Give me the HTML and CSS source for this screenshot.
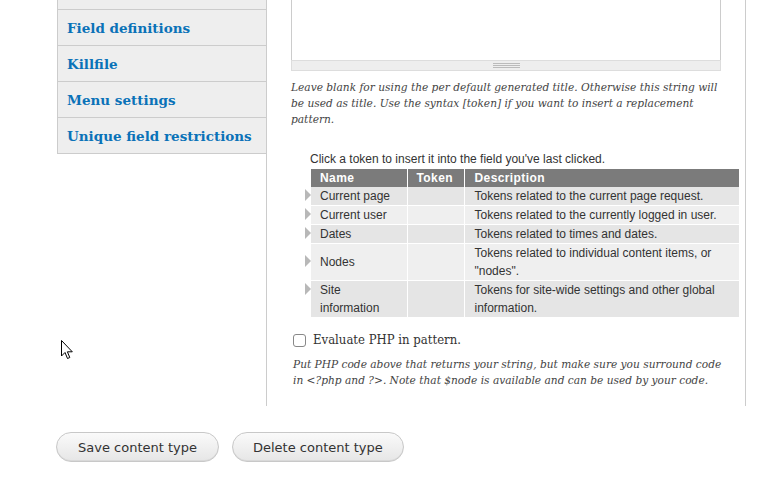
FILE: index.html
```html
<!DOCTYPE html>
<html>
<head>
<meta charset="utf-8">
<link rel="stylesheet" href="styles.css">
</head>
<body>
<div class="page">
  <div class="vtabs">
    <ul class="vtabs-menu">
      <li class="vtab vtab-cut"><a href="#">Publishing options</a></li>
      <li class="vtab"><a href="#">Field definitions</a></li>
      <li class="vtab"><a href="#">Killfile</a></li>
      <li class="vtab"><a href="#">Menu settings</a></li>
      <li class="vtab"><a href="#">Unique field restrictions</a></li>
    </ul>
    <div class="vtabs-pane">
      <div class="textarea-wrap">
        <div class="textarea"></div>
        <div class="grippie"><span class="grip-lines"></span></div>
      </div>
      <p class="description">Leave blank for using the per default generated title. Otherwise this string will be used as title. Use the syntax [token] if you want to insert a replacement pattern.</p>

      <div class="token-block">
        <p class="token-help">Click a token to insert it into the field you've last clicked.</p>
        <table class="token-tree">
          <colgroup>
            <col class="col-name">
            <col class="col-token">
            <col class="col-desc">
          </colgroup>
          <thead>
            <tr><th>Name</th><th>Token</th><th class="c-desc">Description</th></tr>
          </thead>
          <tbody>
            <tr class="dark"><td class="c-name"><span class="exp"></span>Current page</td><td></td><td class="c-desc">Tokens related to the current page request.</td></tr>
            <tr class="light"><td class="c-name"><span class="exp"></span>Current user</td><td></td><td class="c-desc">Tokens related to the currently logged in user.</td></tr>
            <tr class="dark"><td class="c-name"><span class="exp"></span>Dates</td><td></td><td class="c-desc">Tokens related to times and dates.</td></tr>
            <tr class="light"><td class="c-name"><span class="exp"></span>Nodes</td><td></td><td class="c-desc">Tokens related to individual content items, or "nodes".</td></tr>
            <tr class="dark"><td class="c-name"><span class="exp"></span>Site information</td><td></td><td class="c-desc">Tokens for site-wide settings and other global information.</td></tr>
          </tbody>
        </table>
      </div>

      <div class="check-item">
        <label class="check-label"><span class="checkbox"></span>Evaluate PHP in pattern.</label>
        <p class="description desc-php">Put PHP code above that returns your string, but make sure you surround code in &lt;?php and ?&gt;. Note that $node is available and can be used by your code.</p>
      </div>
    </div>
  </div>

  <div class="actions">
    <button class="btn">Save content type</button>
    <button class="btn btn-delete">Delete content type</button>
  </div>
</div>

<svg class="cursor" width="13" height="20" viewBox="0 0 13 20">
  <path d="M0.5 0.5 L0.5 16 L4 12.5 L6.5 18.5 L8.8 17.5 L6.4 11.8 L11.3 11.8 Z" fill="#fff" stroke="#000" stroke-width="1" stroke-linejoin="miter"/>
</svg>
</body>
</html>
```

FILE: styles.css
```css
html, body {
  margin: 0;
  padding: 0;
  background: #fff;
}

body {
  font-family: "DejaVu Serif", serif;
  color: #333;
  overflow: hidden;
}

.page {
  padding-left: 56px;
  margin-top: -26px;
}

.vtabs {
  display: flex;
  align-items: stretch;
  margin-left: 1px;
}

.vtabs-menu {
  list-style: none;
  margin: 0;
  padding: 0;
  width: 208px;
  border-left: 1px solid #ccc;
  align-self: flex-start;
}

.vtab {
  height: 35px;
  border-bottom: 1px solid #ccc;
  background: #eee;
  display: flex;
  align-items: center;
  padding-left: 9px;
}

.vtab a {
  font-family: "DejaVu Serif", serif;
  font-weight: bold;
  font-size: 13.5px;
  color: #0a72b8;
  text-decoration: none;
}

.vtab-cut a {
  visibility: hidden;
}

.vtabs-pane {
  border-left: 1px solid #ccc;
  border-right: 1px solid #ccc;
  padding: 0 24px 0 24px;
  box-sizing: border-box;
  width: 480px;
  height: 432px;
}

.textarea-wrap {
  width: 430px;
}

.textarea {
  height: 85px;
  border: 1px solid #ccc;
  border-bottom: none;
  background: #fff;
}

.grippie {
  height: 9px;
  background: #eee;
  border: 1px solid #ddd;
  display: flex;
  align-items: center;
  justify-content: center;
}

.grip-lines {
  display: block;
  width: 27px;
  height: 5px;
  background: repeating-linear-gradient(#bbb 0, #bbb 1px, transparent 1px, transparent 2px);
}

.description {
  font-family: "DejaVu Serif Condensed", "DejaVu Serif", serif;
  font-style: italic;
  font-size: 11.8px;
  line-height: 16px;
  color: #444;
  margin: 8px 0 0;
}

.token-block {
  margin: 25px 0 0 20px;
  width: 428px;
  font-family: "Liberation Sans", Arial, sans-serif;
  font-size: 12px;
  color: #333;
}

.token-help {
  margin: 0 0 3px -1px;
  line-height: 14px;
}

.token-tree {
  width: 428px;
  border-collapse: collapse;
  table-layout: fixed;
}

.col-name { width: 96px; }
.col-token { width: 57px; }

.token-tree th,
.token-tree td {
  padding: 0 4px 0 9px;
  text-align: left;
  vertical-align: middle;
  line-height: 18px;
  border-left: 1px solid #fff;
  border-bottom: 1px solid #fff;
}

.token-tree th:first-child,
.token-tree td:first-child {
  border-left: none;
}

.token-tree th {
  background: #7b7b7b;
  color: #fff;
  font-weight: bold;
  letter-spacing: 0.4px;
  height: 18px;
  border-bottom: none;
}

.token-tree .c-desc { padding-left: 10px; }

.token-tree tr.dark td { background: #e5e5e5; }
.token-tree tr.light td { background: #efefef; }

.exp {
  display: inline-block;
  vertical-align: -1px;
  width: 0;
  height: 0;
  margin-left: -15px;
  margin-right: 9px;
  border-top: 6px solid transparent;
  border-bottom: 6px solid transparent;
  border-left: 6px solid #b8b8b8;
}

.check-item {
  margin: 14px -4px 0 2px;
}

.check-label {
  display: flex;
  align-items: center;
  font-family: "DejaVu Serif Condensed", "DejaVu Serif", serif;
  font-size: 13px;
  color: #333;
  line-height: 16px;
}

.checkbox {
  width: 11px;
  height: 11px;
  border: 1px solid #888;
  border-radius: 3px;
  background: #fff;
  margin-right: 7px;
}

.desc-php {
  margin-top: 8px;
}

.actions {
  display: flex;
  gap: 13px;
}

.btn {
  font-family: "DejaVu Sans", sans-serif;
  font-size: 13px;
  color: #333;
  height: 30px;
  padding: 0 21px;
  border: 1px solid #c8c8c8;
  border-radius: 15px;
  background: linear-gradient(#fafafa, #e6e6e6);
  box-shadow: inset 0 -1px 0 #d9d9d9;
  margin-top: 26px;
}

.btn-delete {
  padding: 0 20px;
}

.cursor {
  position: absolute;
  left: 61px;
  top: 340px;
}
```
